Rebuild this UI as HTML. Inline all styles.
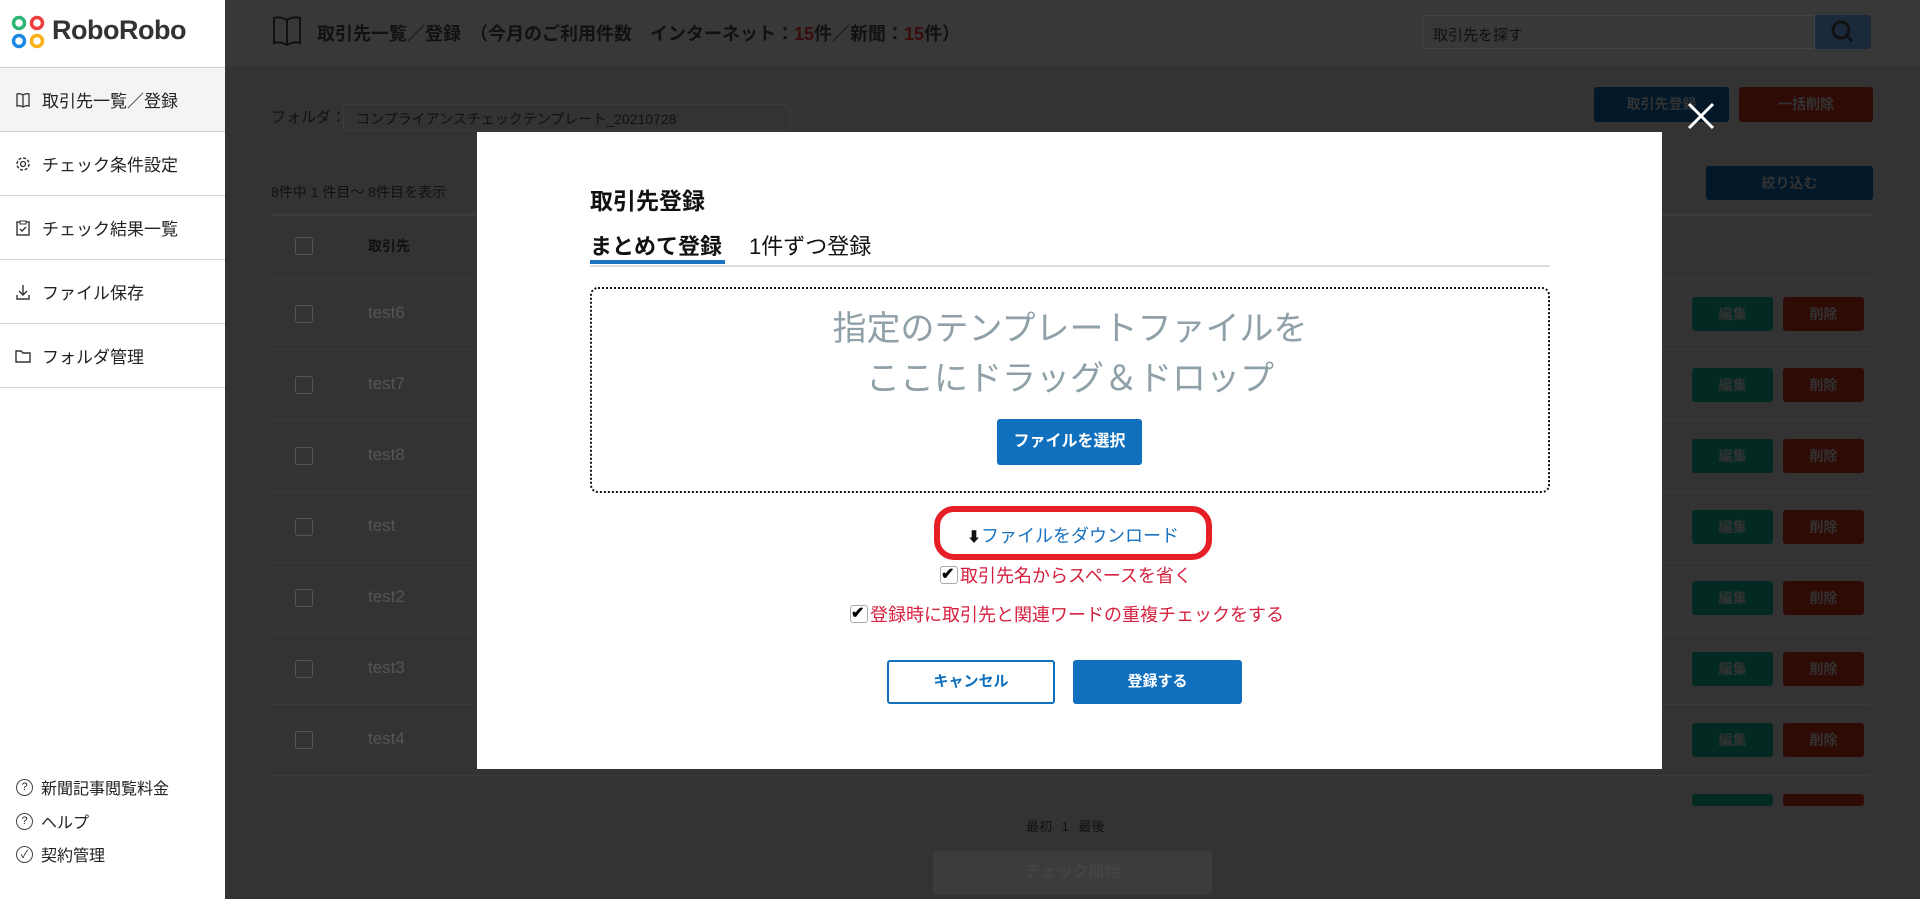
<!DOCTYPE html>
<html style="background:#333"><head><meta charset="utf-8"><style>
*{box-sizing:border-box;margin:0;padding:0}
body{width:1920px;height:899px;overflow:hidden;position:relative;font-family:"Liberation Sans","Noto Sans CJK JP",sans-serif;background:#333;color:#222}
.abs{position:absolute}
.side{left:0;top:0;width:225px;height:899px;background:#fff;z-index:5}
.item{position:absolute;left:0;width:225px;height:64px;border-bottom:1px solid #d0d0d0;font-size:17px;color:#222;display:flex;align-items:center;padding-left:42px}
.item svg{position:absolute;left:14px}
.blink{position:absolute;left:16px;font-size:16px;color:#222;display:flex;align-items:center;gap:8px}
.circ{width:17px;height:17px;border:1.5px solid #444;border-radius:50%;font-size:11px;display:flex;align-items:center;justify-content:center}
.row{position:absolute;left:271px;width:1600px;height:71px;border-bottom:1px solid #3a3a3a}
.cb{position:absolute;left:24px;width:18px;height:18px;border:1px solid #555;border-radius:3px}
.nm{position:absolute;left:97px;font-size:17px;color:#555}
.eb{position:absolute;width:81px;height:34px;border-radius:3px;font-size:14px;font-weight:bold;display:flex;align-items:center;justify-content:center}
.modal{left:477px;top:132px;width:1185px;height:637px;background:#fff;z-index:10}
</style></head><body>
<div class="abs" style="left:225px;top:0;width:1695px;height:66px;background:#383838"></div>
<svg class="abs" style="left:272px;top:15px" width="30" height="32" viewBox="0 0 30 32"><path d="M2 3 Q8 1 15 5 Q22 1 28 3 V28 Q22 26 15 30 Q8 26 2 28Z M15 5V30" fill="none" stroke="#111" stroke-width="2"/></svg>
<div class="abs" style="left:317px;top:20px;font-size:18px;font-weight:bold;color:#111;white-space:pre">取引先一覧／登録　（今月のご利用件数　インターネット：<span style="color:#3a0c0c">15</span>件／新聞：<span style="color:#3a0c0c">15</span>件）</div>
<div class="abs" style="left:1422px;top:15px;width:393px;height:34px;border:1px solid #444;border-radius:3px 0 0 3px;font-size:15px;color:#111;padding:8px 10px">取引先を探す</div>
<div class="abs" style="left:1815px;top:15px;width:56px;height:34px;background:#1b2a3a;border-radius:0 3px 3px 0"><svg width="56" height="34"><circle cx="26" cy="15" r="8" fill="none" stroke="#111" stroke-width="3"/><path d="M32 21l5 5" stroke="#111" stroke-width="3"/></svg></div>
<div class="abs" style="left:271px;top:106px;font-size:15px;color:#111">フォルダ：</div>
<div class="abs" style="left:343px;top:104px;width:448px;height:27px;border:1px solid #3c3c3c;border-radius:3px;font-size:14px;color:#111;padding:4px 12px">コンプライアンスチェックテンプレート_20210728</div>
<div class="abs" style="left:1594px;top:87px;width:135px;height:35px;background:#021829;border-radius:3px;color:#333;font-size:14px;font-weight:bold;text-align:center;line-height:35px">取引先登録</div>
<div class="abs" style="left:1739px;top:87px;width:134px;height:35px;background:#2e0b05;border-radius:3px;color:#333;font-size:14px;font-weight:bold;text-align:center;line-height:35px">一括削除</div>
<div class="abs" style="left:271px;top:182px;font-size:14px;color:#111">8件中 1 件目～ 8件目を表示</div>
<div class="abs" style="left:1706px;top:166px;width:167px;height:34px;background:#021829;border-radius:3px;color:#333;font-size:14px;font-weight:bold;text-align:center;line-height:34px">絞り込む</div>
<div class="abs" style="left:271px;top:213px;width:1600px;height:3px;background:#3b3b3b"></div>
<div class="row" style="top:216px;height:63px"><div class="cb" style="top:21px"></div><div class="nm" style="top:20px;font-size:14px;font-weight:bold;color:#111">取引先</div></div>
<div class="row" style="top:279px"><div class="cb" style="top:26px"></div><div class="nm" style="top:24px">test6</div><div class="eb" style="left:1421px;top:18px;background:#022a22;color:#333">編集</div><div class="eb" style="left:1512px;top:18px;background:#2e0b05;color:#333">削除</div></div>
<div class="row" style="top:350px"><div class="cb" style="top:26px"></div><div class="nm" style="top:24px">test7</div><div class="eb" style="left:1421px;top:18px;background:#022a22;color:#333">編集</div><div class="eb" style="left:1512px;top:18px;background:#2e0b05;color:#333">削除</div></div>
<div class="row" style="top:421px"><div class="cb" style="top:26px"></div><div class="nm" style="top:24px">test8</div><div class="eb" style="left:1421px;top:18px;background:#022a22;color:#333">編集</div><div class="eb" style="left:1512px;top:18px;background:#2e0b05;color:#333">削除</div></div>
<div class="row" style="top:492px"><div class="cb" style="top:26px"></div><div class="nm" style="top:24px">test</div><div class="eb" style="left:1421px;top:18px;background:#022a22;color:#333">編集</div><div class="eb" style="left:1512px;top:18px;background:#2e0b05;color:#333">削除</div></div>
<div class="row" style="top:563px"><div class="cb" style="top:26px"></div><div class="nm" style="top:24px">test2</div><div class="eb" style="left:1421px;top:18px;background:#022a22;color:#333">編集</div><div class="eb" style="left:1512px;top:18px;background:#2e0b05;color:#333">削除</div></div>
<div class="row" style="top:634px"><div class="cb" style="top:26px"></div><div class="nm" style="top:24px">test3</div><div class="eb" style="left:1421px;top:18px;background:#022a22;color:#333">編集</div><div class="eb" style="left:1512px;top:18px;background:#2e0b05;color:#333">削除</div></div>
<div class="row" style="top:705px"><div class="cb" style="top:26px"></div><div class="nm" style="top:24px">test4</div><div class="eb" style="left:1421px;top:18px;background:#022a22;color:#333">編集</div><div class="eb" style="left:1512px;top:18px;background:#2e0b05;color:#333">削除</div></div>
<div class="eb abs" style="left:1692px;top:794px;height:12px;background:#022a22"></div><div class="eb abs" style="left:1783px;top:794px;height:12px;background:#2e0b05"></div>
<div class="abs" style="left:1026px;top:816px;font-size:13px;color:#111;word-spacing:6px">最初 1 最後</div>
<div class="abs" style="left:933px;top:851px;width:279px;height:44px;background:#3c3c3c;border-radius:3px;color:#444;font-size:16px;font-weight:bold;text-align:center;line-height:44px">チェック開始</div>
<svg class="abs" style="left:1685px;top:100px;z-index:11" width="32" height="32"><path d="M4 4L28 28M28 4L4 28" stroke="#fff" stroke-width="3"/></svg>
<div class="abs side">
<svg class="abs" style="left:11px;top:15px" width="35" height="35"><g fill="none" stroke-width="3.5"><circle cx="8" cy="8" r="5.5" stroke="#2bb673"/><circle cx="26" cy="8" r="5.5" stroke="#ee3e3e"/><circle cx="8" cy="26" r="5.5" stroke="#1e88e5"/><circle cx="26" cy="26" r="5.5" stroke="#fbb117"/></g></svg>
<div class="abs" style="left:52px;top:15px;font-size:27px;font-weight:bold;color:#333;letter-spacing:-0.5px">RoboRobo</div>
<div class="item" style="top:67px;height:65px;background:#f4f4f4;border-top:1px solid #d0d0d0"><svg width="18" height="18"><path d="M3 3Q6 2 9 4Q12 2 15 3V15Q12 14 9 16Q6 14 3 15Z M9 4V16" fill="none" stroke="#333" stroke-width="1.3"/></svg>取引先一覧／登録</div>
<div class="item" style="top:132px"><svg width="18" height="18"><circle cx="9" cy="9" r="6" fill="none" stroke="#333" stroke-width="1.5" stroke-dasharray="3 1.7"/><circle cx="9" cy="9" r="2.5" fill="none" stroke="#333" stroke-width="1.3"/></svg>チェック条件設定</div>
<div class="item" style="top:196px"><svg width="18" height="18"><rect x="3" y="3" width="12" height="13" fill="none" stroke="#333" stroke-width="1.4"/><path d="M6 2h6v3H6z" fill="#fff" stroke="#333"/><path d="M6 10l2 2 4-4" fill="none" stroke="#333" stroke-width="1.4"/></svg>チェック結果一覧</div>
<div class="item" style="top:260px"><svg width="18" height="18"><path d="M9 2v9M5 8l4 4 4-4M3 12v4h12v-4" fill="none" stroke="#333" stroke-width="1.4"/></svg>ファイル保存</div>
<div class="item" style="top:324px"><svg width="18" height="18"><path d="M2 4h5l2 2h7v9H2z" fill="none" stroke="#333" stroke-width="1.4"/></svg>フォルダ管理</div>
<div class="blink" style="top:775px"><span class="circ">?</span>新聞記事閲覧料金</div>
<div class="blink" style="top:809px"><span class="circ">?</span>ヘルプ</div>
<div class="blink" style="top:842px"><span class="circ">✓</span>契約管理</div>
</div>
<div class="abs modal">
<div class="abs" style="left:113px;top:50px;font-size:23px;font-weight:bold;color:#111">取引先登録</div>
<div class="abs" style="left:113px;top:97px;font-size:22px;font-weight:bold;color:#111">まとめて登録</div>
<div class="abs" style="left:272px;top:97px;font-size:22px;color:#111">1件ずつ登録</div>
<div class="abs" style="left:113px;top:133px;width:960px;height:2px;background:#ddd"></div>
<div class="abs" style="left:113px;top:128px;width:135px;height:4px;background:#1a73c0"></div>
<div class="abs" style="left:113px;top:155px;width:960px;height:206px;border:2px dotted #111;border-radius:8px"></div>
<div class="abs" style="left:113px;top:172px;width:960px;text-align:center;font-size:34px;line-height:50px;color:#8fa0a8">指定のテンプレートファイルを<br>ここにドラッグ＆ドロップ</div>
<div class="abs" style="left:520px;top:287px;width:145px;height:46px;background:#1170bd;border-radius:3px;color:#fff;font-size:16px;font-weight:bold;text-align:center;line-height:46px">ファイルを選択</div>
<div class="abs" style="left:457px;top:374px;width:278px;height:54px;border:6px solid #e61f27;border-radius:20px"></div>
<div class="abs" style="left:457px;top:390px;width:278px;text-align:center;font-size:18px;color:#1a73c0"><span style="color:#111;font-size:14px">⬇</span>ファイルをダウンロード</div>
<div class="abs" style="left:463px;top:430px;font-size:18px;color:#d6203f;display:flex;align-items:center;gap:2px"><span style="width:18px;height:18px;border:1px solid #aaa;border-radius:3px;font-size:16px;line-height:16px;color:#000;font-weight:bold">✔</span>取引先名からスペースを省く</div>
<div class="abs" style="left:373px;top:469px;font-size:18px;color:#d6203f;display:flex;align-items:center;gap:2px"><span style="width:18px;height:18px;border:1px solid #aaa;border-radius:3px;font-size:16px;line-height:16px;color:#000;font-weight:bold">✔</span>登録時に取引先と関連ワードの重複チェックをする</div>
<div class="abs" style="left:410px;top:528px;width:168px;height:44px;border:2px solid #1170bd;border-radius:3px;color:#1170bd;font-size:15px;font-weight:bold;text-align:center;line-height:40px">キャンセル</div>
<div class="abs" style="left:596px;top:528px;width:169px;height:44px;background:#1170bd;border-radius:3px;color:#fff;font-size:15px;font-weight:bold;text-align:center;line-height:44px">登録する</div>
</div>
</body></html>
